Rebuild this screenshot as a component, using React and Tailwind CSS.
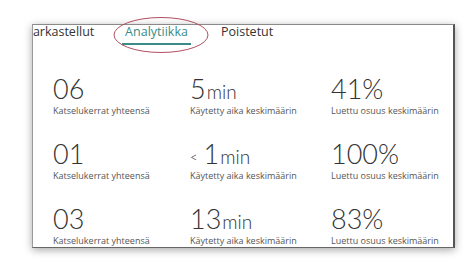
import React from "react";

const rows = [
  ["06", { pre: null, n: "5" }, "41%"],
  ["01", { pre: "<", n: "1" }, "100%"],
  ["03", { pre: null, n: "13" }, "83%"],
];

function Num({ children }) {
  return (
    <div
      className="h-[28px] text-[27px] leading-[28px] font-light text-[#333] whitespace-nowrap"
      style={{ fontFamily: "Lato, sans-serif" }}
    >
      {children}
    </div>
  );
}
function Label({ children }) {
  return (
    <div
      className="text-[9px] leading-[12px] text-[#555] mt-[2px] whitespace-nowrap"
      style={{ fontFamily: "'Open Sans', sans-serif" }}
    >
      {children}
    </div>
  );
}

export default function App() {
  return (
    <div className="w-[474px] h-[275px] bg-white overflow-hidden relative pt-[24px] pl-[32px]">
      <div className="w-[423px] h-[224px] border border-t-[#8a8a8a] border-l-[#9a9a9a] border-r-[#555] border-b-[#666] border-r-2 bg-white overflow-hidden shadow-[0_2px_8px_rgba(0,0,0,0.35)]">
        <div
          className="flex items-start -ml-[7px] text-[12.5px] leading-[13px] text-[#333]"
          style={{ fontFamily: "'Open Sans', sans-serif" }}
        >
          <div className="w-[96px]">Tarkastellut</div>
          <div className="w-[69px] text-center text-[#3a8c86] pb-[5px] border-b-2 border-[#3a8c86]">Analytiikka</div>
          <div className="ml-[30px]">Poistetut</div>
        </div>
        <div className="mt-[30px] pl-[20px] grid grid-cols-[137px_141px_1fr] gap-y-[23px]">
          {rows.map((r, i) => (
            <React.Fragment key={i}>
              <div>
                <Num>{r[0]}</Num>
                <Label>Katselukerrat yhteensä</Label>
              </div>
              <div>
                <Num>
                  {r[1].pre && <span className="text-[13px] leading-none mr-[6px] relative -top-[2px]">{r[1].pre}</span>}
                  {r[1].n}
                  <span className="text-[19px] leading-none ml-[1px]">min</span>
                </Num>
                <Label>Käytetty aika keskimäärin</Label>
              </div>
              <div>
                <Num>{r[2]}</Num>
                <Label>Luettu osuus keskimäärin</Label>
              </div>
            </React.Fragment>
          ))}
        </div>
      </div>
      <svg className="absolute left-0 top-0" width="474" height="275">
        <ellipse cx="161" cy="35" rx="47" ry="17.5" fill="none" stroke="#b05060" strokeWidth="1" />
      </svg>
    </div>
  );
}
